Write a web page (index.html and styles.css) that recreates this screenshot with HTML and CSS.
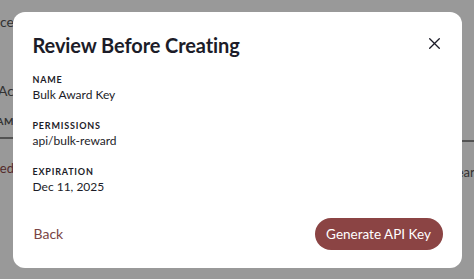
FILE: index.html
```html
<!DOCTYPE html>
<html lang="en">
<head>
<meta charset="utf-8">
<title>Review Before Creating</title>
<link rel="stylesheet" href="styles.css">
</head>
<body>
<div class="page">
  <div class="bg-col bg-left">
    <div class="bg-item bg-title"><span>Balance</span></div>
    <div class="bg-item bg-search"><span>LAc</span></div>
    <div class="bg-item bg-head"><span>NAM</span></div>
    <div class="bg-rule"></div>
    <div class="bg-item bg-link"><span>Reed</span></div>
  </div>
  <div class="bg-col bg-right">
    <div class="bg-rule bg-rule-right"></div>
    <div class="bg-item bg-cell"><span>Year</span></div>
  </div>
</div>

<div class="overlay">
  <div class="modal" role="dialog" aria-labelledby="modal-title">
    <div class="modal-header">
      <h1 id="modal-title" class="modal-title">Review Before Creating</h1>
      <button class="close-btn" aria-label="Close">
        <svg width="11" height="11" viewBox="0 0 11 11" aria-hidden="true">
          <path d="M0.7 0.7 L10.3 10.3 M10.3 0.7 L0.7 10.3" stroke="#1c1c28" stroke-width="1.3" stroke-linecap="round" fill="none"/>
        </svg>
      </button>
    </div>
    <dl class="fields">
      <div class="field">
        <dt class="field-label">NAME</dt>
        <dd class="field-value">Bulk Award Key</dd>
      </div>
      <div class="field">
        <dt class="field-label">PERMISSIONS</dt>
        <dd class="field-value">api/bulk-reward</dd>
      </div>
      <div class="field">
        <dt class="field-label">EXPIRATION</dt>
        <dd class="field-value">Dec 11, 2025</dd>
      </div>
    </dl>
    <div class="modal-footer">
      <button class="back-btn">Back</button>
      <button class="primary-btn">Generate API Key</button>
    </div>
  </div>
</div>
</body>
</html>
```

FILE: styles.css
```css
* { box-sizing: border-box; }

html, body {
  margin: 0;
  padding: 0;
  width: 474px;
  height: 279px;
  overflow: hidden;
}

body {
  background: #ffffff;
  font-family: "Lato", "Noto Sans", sans-serif;
  color: #1c1c28;
}

/* background page (under the overlay) */
.page {
  display: flex;
  justify-content: space-between;
  height: 279px;
  font-size: 13px;
  color: #555555;
}

.bg-col {
  display: flex;
  flex-direction: column;
  overflow: hidden;
}

.bg-left { width: 14px; }
.bg-right { width: 12px; padding-top: 140px; }

.bg-item {
  display: flex;
  justify-content: flex-end;
  white-space: nowrap;
}

.bg-right .bg-item { justify-content: flex-start; }

.bg-title { margin-top: 13px; font-size: 14px; }
.bg-search { margin-top: 52px; font-size: 14px; }
.bg-head { margin-top: 16px; font-size: 10px; font-weight: 700; letter-spacing: 0.5px; }
.bg-rule { height: 2px; background: #8a8a8a; margin-top: 10px; }
.bg-rule-right { margin-top: 0; }
.bg-link { margin-top: 21px; color: #8e4a4a; }
.bg-cell { margin-top: 22px; margin-left: -12px; }

/* overlay + modal */
.overlay {
  position: fixed;
  inset: 0;
  background: rgba(0, 0, 0, 0.4);
  display: flex;
  align-items: center;
  justify-content: center;
}

.modal {
  width: 449px;
  height: 256px;
  background: #ffffff;
  border-radius: 12px;
  padding: 20px 22px 18px 20px;
  display: flex;
  flex-direction: column;
}

.modal-header {
  display: flex;
  justify-content: space-between;
  align-items: flex-start;
}

.modal-title {
  margin: 0;
  font-size: 20px;
  line-height: 26px;
  font-weight: 700;
  color: #1c1c28;
  letter-spacing: -0.1px;
}

.close-btn {
  border: 0;
  background: none;
  padding: 0;
  margin-top: 6px;
  width: 11px;
  height: 11px;
  display: flex;
  cursor: pointer;
}

.fields {
  margin: 16px 0 0 0;
  display: flex;
  flex-direction: column;
  gap: 17px;
}

.field-label {
  font-size: 9px;
  line-height: 11px;
  font-weight: 700;
  letter-spacing: 0.8px;
  color: #1c1c28;
}

.field-value {
  margin: 2px 0 0 0;
  font-size: 12px;
  line-height: 16px;
  color: #1c1c28;
}

.modal-footer {
  margin-top: auto;
  display: flex;
  justify-content: space-between;
  align-items: center;
}

.back-btn {
  border: 0;
  background: none;
  padding: 0 0 0 1px;
  font-family: inherit;
  font-size: 14px;
  color: #7a4545;
  cursor: pointer;
}

.primary-btn {
  border: 0;
  margin-right: -3px;
  width: 128px;
  height: 32px;
  border-radius: 16px;
  background: #8b4444;
  color: #ffffff;
  font-family: inherit;
  font-size: 13.5px;
  cursor: pointer;
}
```
